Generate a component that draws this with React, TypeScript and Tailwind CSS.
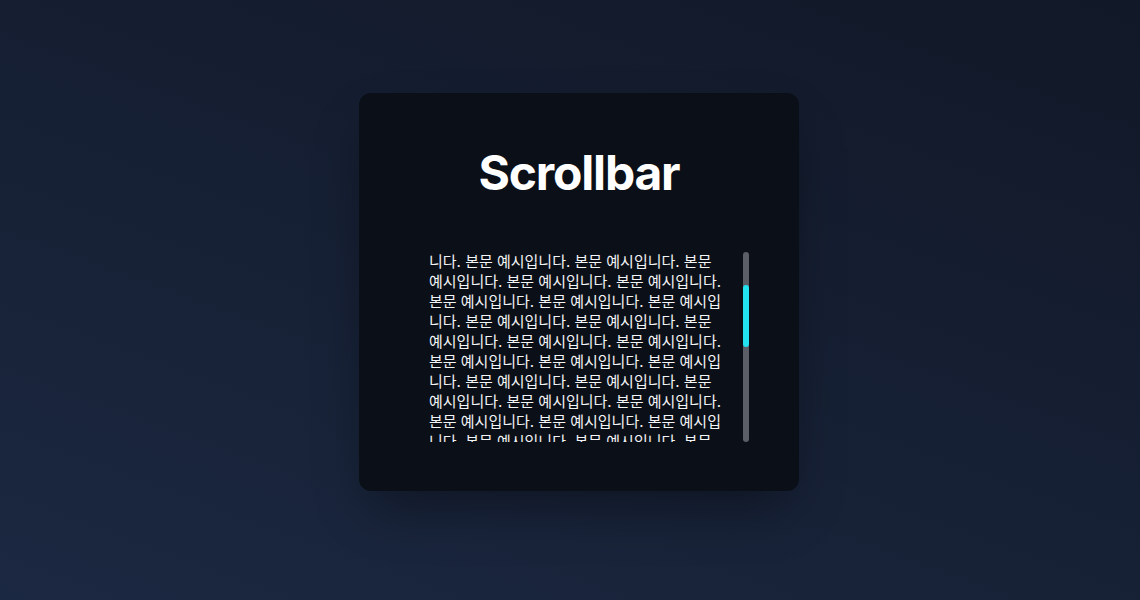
import { useEffect, useRef, useState } from "react";

const sample = "예시입니다. " + Array.from({ length: 75 }, () => "본문 예시입니다.").join(" ");

export default function App() {
  const boxRef = useRef<HTMLDivElement>(null);
  const [thumb, setThumb] = useState({ top: 0, height: 0 });

  // keep the custom thumb in sync with the scroll box
  const syncThumb = () => {
    const el = boxRef.current;
    if (!el) return;
    const track = el.clientHeight;
    setThumb({
      top: (el.scrollTop / el.scrollHeight) * track,
      height: (el.clientHeight / el.scrollHeight) * track,
    });
  };

  useEffect(() => {
    const init = () => {
      if (boxRef.current) boxRef.current.scrollTop = 100;
      syncThumb();
    };
    init();
    document.fonts.ready.then(init);
    const ro = new ResizeObserver(syncThumb);
    if (boxRef.current?.firstElementChild) ro.observe(boxRef.current.firstElementChild);
    return () => ro.disconnect();
  }, []);

  return (
    <div className="min-h-screen w-full flex items-center justify-center pl-[18px] pb-4 bg-linear-200 from-[#111827] to-[#1b2841] font-['Inter','Noto_Sans_CJK_KR',sans-serif]">
      <div className="w-[440px] rounded-xl bg-[#0b0f17] pt-14 pb-[49px] shadow-2xl shadow-black/40">
        <h1 className="text-center text-5xl leading-none font-bold tracking-tight text-white">Scrollbar</h1>
        <div className="mx-auto mt-[55px] flex h-[190px] w-[340px]">
          <div
            ref={boxRef}
            onScroll={syncThumb}
            className="flex-1 overflow-y-scroll pl-5 pr-[14px] text-[15px] leading-5 text-gray-100 [scrollbar-width:none] [&::-webkit-scrollbar]:hidden"
          >
            <p>{sample}</p>
          </div>
          <div className="relative w-1.5 rounded-full bg-[#5b5e67]">
            <div
              className="absolute left-0 w-full rounded-full bg-[#22e3ef]"
              style={{ top: thumb.top, height: thumb.height }}
            />
          </div>
        </div>
      </div>
    </div>
  );
}
